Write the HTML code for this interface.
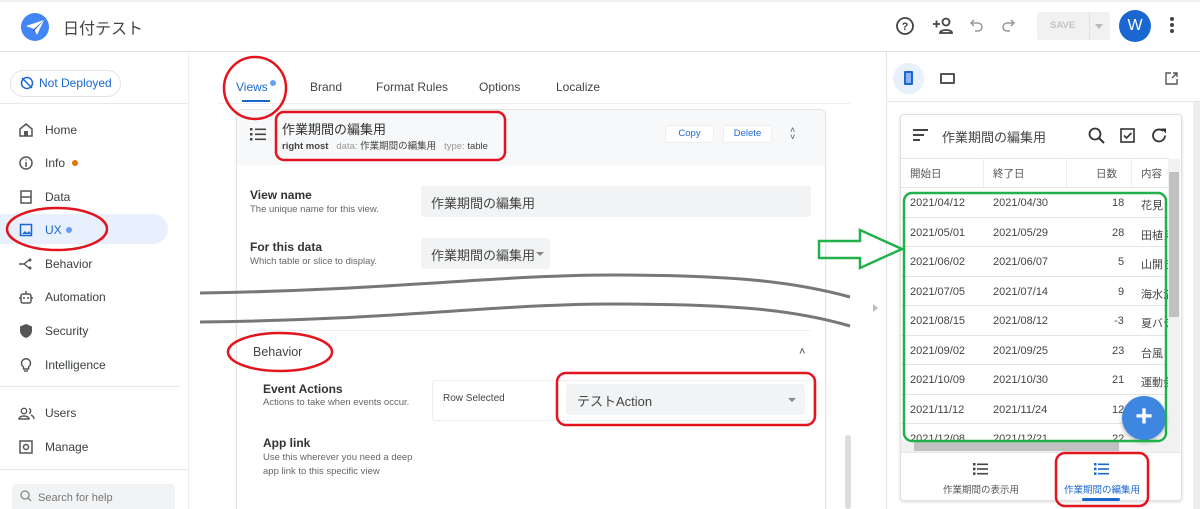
<!DOCTYPE html>
<html><head><meta charset="utf-8"><style>
*{box-sizing:border-box;margin:0;padding:0}
html,body{width:1200px;height:509px;overflow:hidden}
body{background:#fff;font-family:"Liberation Sans","Noto Sans CJK JP",sans-serif;color:#202124;position:relative}
.a{position:absolute;white-space:nowrap}
.nav{font-size:12px;color:#3c4043}
.ic{position:absolute;width:12px;height:12px;border:1.6px solid #555;border-radius:2px}
.lbl{font-size:12px;font-weight:bold;color:#333}
.sub{font-size:9.5px;color:#666}
.row{position:absolute;left:900px;width:268px;height:29.5px;border-bottom:1px solid #e4e4e4;font-size:11px;color:#444;overflow:hidden}
.row span{position:absolute;top:9px;white-space:nowrap}
.tab{font-size:12px;color:#444;top:80px}
</style></head><body>
<!-- top bar -->
<div class="a" style="left:0;top:0;width:1200px;height:2px;background:#eee"></div>
<div class="a" style="left:0;top:51px;width:1200px;height:1px;background:#e0e0e0"></div>
<svg class="a" style="left:20px;top:12px" width="30" height="30" viewBox="0 0 30 30"><circle cx="15" cy="15" r="14" fill="#4285f4"/><path d="M6 14 L24 8 L17 23 L14 17 Z" fill="#fff"/><path d="M14 17 L24 8 L13 20 Z" fill="#1a56b8"/></svg>
<div class="a" style="left:63px;top:15px;font-size:16px;color:#444">日付テスト</div>
<svg class="a" style="left:895px;top:16px" width="20" height="20" viewBox="0 0 20 20"><circle cx="10" cy="10" r="8" fill="none" stroke="#444" stroke-width="1.8"/><text x="10" y="14" font-size="11" text-anchor="middle" fill="#444" font-family="Liberation Sans" font-weight="bold">?</text></svg>
<svg class="a" style="left:932px;top:16px" width="22" height="20" viewBox="0 0 22 20"><path d="M1 8h7M4.5 4.5v7" stroke="#444" stroke-width="1.8"/><circle cx="14" cy="6" r="3.5" fill="none" stroke="#444" stroke-width="1.8"/><path d="M8 17c0-4 12-4 12 0z" fill="none" stroke="#444" stroke-width="1.8"/></svg>
<svg class="a" style="left:970px;top:18px" width="14" height="14" viewBox="0 0 14 14"><path d="M4 2L1 5l3 3M1 5h7a4 4 0 010 8H5" fill="none" stroke="#999" stroke-width="1.5"/></svg>
<svg class="a" style="left:1001px;top:18px" width="14" height="14" viewBox="0 0 14 14"><path d="M10 2l3 3-3 3M13 5H6a4 4 0 000 8h3" fill="none" stroke="#999" stroke-width="1.5"/></svg>
<div class="a" style="left:1037px;top:12px;width:73px;height:28px;background:#f1f1f1;border-radius:3px"></div>
<div class="a" style="left:1089px;top:12px;width:1px;height:28px;background:#e2e2e2"></div>
<div class="a" style="left:1050px;top:20px;font-size:9.5px;color:#c4c4c4;font-weight:bold">SAVE</div>
<div class="a" style="left:1095px;top:24px;border:4px solid transparent;border-top:5px solid #bbb"></div>
<div class="a" style="left:1119px;top:10px;width:32px;height:32px;border-radius:50%;background:#1a67d2;color:#fff;font-size:16px;text-align:center;line-height:32px">W</div>
<div class="a" style="left:1170px;top:17px;width:4px;height:4px;border-radius:50%;background:#444;box-shadow:0 6px 0 #444,0 12px 0 #444"></div>

<!-- sidebar -->
<div class="a" style="left:10px;top:70px;width:111px;height:27px;border:1px solid #e3e3e3;border-radius:14px"></div>
<svg class="a" style="left:20px;top:76px" width="14" height="14" viewBox="0 0 14 14"><circle cx="7" cy="7" r="5.5" fill="none" stroke="#1a67d2" stroke-width="1.5"/><path d="M2 2l10 10" stroke="#1a67d2" stroke-width="1.5"/></svg>
<div class="a" style="left:39px;top:76px;font-size:12px;color:#1a67d2">Not Deployed</div>
<div class="a" style="left:0;top:103px;width:188px;height:1px;background:#e8e8e8"></div>
<div class="a" style="left:0;top:214px;width:168px;height:30px;background:#e8f0fe;border-radius:0 15px 15px 0"></div>
<div class="a nav" style="left:45px;top:123px">Home</div>
<div class="a nav" style="left:45px;top:156px">Info</div><div class="a" style="left:72px;top:160px;width:6px;height:6px;border-radius:50%;background:#e37400"></div>
<div class="a nav" style="left:45px;top:190px">Data</div>
<div class="a nav" style="left:45px;top:223px;color:#1a67d2">UX</div><div class="a" style="left:66px;top:227px;width:6px;height:6px;border-radius:50%;background:#669df6"></div>
<div class="a nav" style="left:45px;top:257px">Behavior</div>
<div class="a nav" style="left:45px;top:290px">Automation</div>
<div class="a nav" style="left:45px;top:324px">Security</div>
<div class="a nav" style="left:45px;top:358px">Intelligence</div>
<div class="a nav" style="left:45px;top:406px">Users</div>
<div class="a nav" style="left:45px;top:440px">Manage</div>
<svg class="a" style="left:18px;top:122px" width="16" height="16"><path d="M2 7l6-5 6 5v7H2z" fill="none" stroke="#555" stroke-width="1.5"/><rect x="6" y="9" width="4" height="5" fill="#555"/></svg>
<svg class="a" style="left:18px;top:155px" width="16" height="16"><circle cx="8" cy="8" r="6" fill="none" stroke="#555" stroke-width="1.5"/><path d="M8 7v5M8 4.5v1" stroke="#555" stroke-width="1.5"/></svg>
<svg class="a" style="left:18px;top:189px" width="16" height="16"><rect x="3" y="2" width="10" height="12" fill="none" stroke="#555" stroke-width="1.5"/><path d="M3 8h10" stroke="#555" stroke-width="1.5"/></svg>
<svg class="a" style="left:18px;top:222px" width="16" height="16"><rect x="2.5" y="2.5" width="11" height="11" fill="none" stroke="#1a67d2" stroke-width="1.5"/><path d="M4 12l3-3 2 2 2-2 2 3z" fill="#1a67d2"/></svg>
<svg class="a" style="left:18px;top:256px" width="16" height="16"><path d="M1 8h5l5-4M6 8l5 4" fill="none" stroke="#555" stroke-width="1.4"/><circle cx="12" cy="4" r="1.5" fill="#555"/><circle cx="12" cy="12" r="1.5" fill="#555"/></svg>
<svg class="a" style="left:18px;top:289px" width="16" height="16"><rect x="3" y="5" width="10" height="9" rx="2" fill="none" stroke="#555" stroke-width="1.5"/><path d="M8 2v3M1 9h2M13 9h2" stroke="#555" stroke-width="1.5"/><circle cx="6" cy="9" r="1" fill="#555"/><circle cx="10" cy="9" r="1" fill="#555"/></svg>
<svg class="a" style="left:18px;top:323px" width="16" height="16"><path d="M8 1l6 2.5v4c0 4-3 6.5-6 7.5-3-1-6-3.5-6-7.5v-4z" fill="#555"/></svg>
<svg class="a" style="left:18px;top:357px" width="16" height="16"><path d="M5.5 10a4.5 4.5 0 115 0v2h-5z" fill="none" stroke="#555" stroke-width="1.4"/><path d="M6 14h4" stroke="#555" stroke-width="1.4"/></svg>
<svg class="a" style="left:18px;top:405px" width="18" height="16"><circle cx="6" cy="6" r="2.7" fill="none" stroke="#555" stroke-width="1.4"/><path d="M1 14c0-4 10-4 10 0z" fill="none" stroke="#555" stroke-width="1.4"/><path d="M11 3.5a2.7 2.7 0 010 5M13 10c2 1 3 2 3 4" fill="none" stroke="#555" stroke-width="1.4"/></svg>
<svg class="a" style="left:18px;top:439px" width="16" height="16"><rect x="2" y="2" width="12" height="12" fill="none" stroke="#555" stroke-width="1.5"/><circle cx="8" cy="8" r="2.5" fill="none" stroke="#555" stroke-width="1.5"/></svg>
<div class="a" style="left:0;top:386px;width:180px;height:1px;background:#e8e8e8"></div>
<div class="a" style="left:0;top:469px;width:188px;height:1px;background:#e8e8e8"></div>
<div class="a" style="left:12px;top:484px;width:163px;height:30px;background:#f1f3f4;border-radius:4px"></div>
<div class="a" style="left:38px;top:492px;font-size:11px;color:#777">Search for help</div>
<svg class="a" style="left:20px;top:490px" width="12" height="12"><circle cx="5" cy="5" r="4" fill="none" stroke="#888" stroke-width="1.3"/><path d="M8 8l3 3" stroke="#888" stroke-width="1.3"/></svg>
<div class="a" style="left:188px;top:52px;width:1px;height:457px;background:#eee"></div>

<!-- tabs -->
<div class="a tab" style="left:236px;color:#1a67d2">Views</div><div class="a" style="left:270px;top:80px;width:6px;height:6px;border-radius:50%;background:#669df6"></div>
<div class="a" style="left:242px;top:100px;width:28px;height:2px;background:#1a67d2"></div>
<div class="a tab" style="left:310px">Brand</div>
<div class="a tab" style="left:376px">Format Rules</div>
<div class="a tab" style="left:479px">Options</div>
<div class="a tab" style="left:556px">Localize</div>
<div class="a" style="left:219px;top:103px;width:631px;height:1px;background:#eee"></div>

<!-- card -->
<div class="a" style="left:236px;top:109px;width:590px;height:410px;border:1px solid #e3e3e3;border-radius:6px;box-shadow:0 1px 2px rgba(0,0,0,.08)"></div>
<div class="a" style="left:237px;top:110px;width:588px;height:55px;background:#f7f8f9;border-radius:6px 6px 0 0"></div>
<svg class="a" style="left:250px;top:127px" width="16" height="14"><g fill="#444"><rect x="0" y="1" width="2.5" height="2.5"/><rect x="0" y="6" width="2.5" height="2.5"/><rect x="0" y="11" width="2.5" height="2.5"/><rect x="5" y="1.5" width="11" height="1.6"/><rect x="5" y="6.5" width="11" height="1.6"/><rect x="5" y="11.5" width="11" height="1.6"/></g></svg>
<div class="a" style="left:282px;top:119px;font-size:13px;color:#333">作業期間の編集用</div>
<div class="a" style="left:282px;top:138px;font-size:9.5px;color:#444"><b>right most</b> &nbsp; <span style="color:#999">data:</span> 作業期間の編集用 &nbsp; <span style="color:#999">type:</span> table</div>
<div class="a" style="left:665px;top:125px;width:49px;height:18px;background:#fff;border:1px solid #eee;border-radius:3px;font-size:9.5px;color:#1a67d2;text-align:center;line-height:16px">Copy</div>
<div class="a" style="left:723px;top:125px;width:49px;height:18px;background:#fff;border:1px solid #eee;border-radius:3px;font-size:9.5px;color:#1a67d2;text-align:center;line-height:16px">Delete</div>
<div class="a" style="left:790px;top:127px;font-size:9px;color:#555;line-height:7px">˄<br>˅</div>
<div class="a lbl" style="left:250px;top:188px">View name</div>
<div class="a sub" style="left:250px;top:204px">The unique name for this view.</div>
<div class="a" style="left:421px;top:186px;width:390px;height:31px;background:#f1f3f4;border-radius:3px"></div>
<div class="a" style="left:431px;top:193px;font-size:13px;color:#444">作業期間の編集用</div>
<div class="a lbl" style="left:250px;top:240px">For this data</div>
<div class="a sub" style="left:250px;top:256px">Which table or slice to display.</div>
<div class="a" style="left:421px;top:238px;width:129px;height:31px;background:#f1f3f4;border-radius:3px"></div>
<div class="a" style="left:431px;top:245px;font-size:13px;color:#444">作業期間の編集用</div>
<div class="a" style="left:536px;top:252px;border:4px solid transparent;border-top:4px solid #888"></div>
<div class="a" style="left:237px;top:292px;width:588px;height:36px;background:#fff"></div>
<div class="a" style="left:250px;top:330px;width:560px;height:1px;background:#eee"></div>
<div class="a" style="left:253px;top:345px;font-size:12.5px;color:#444">Behavior</div>
<div class="a" style="left:799px;top:346px;font-size:11px;color:#444">˄</div>
<div class="a lbl" style="left:263px;top:382px">Event Actions</div>
<div class="a sub" style="left:263px;top:397px">Actions to take when events occur.</div>
<div class="a" style="left:432px;top:380px;width:382px;height:41px;border:1px solid #eee;border-radius:3px"></div>
<div class="a" style="left:443px;top:393px;font-size:10px;color:#444">Row Selected</div>
<div class="a" style="left:566px;top:384px;width:239px;height:31px;background:#f1f3f4;border-radius:3px"></div>
<div class="a" style="left:577px;top:391px;font-size:13px;color:#444">テストAction</div>
<div class="a" style="left:788px;top:398px;border:4px solid transparent;border-top:4px solid #888"></div>
<div class="a lbl" style="left:263px;top:436px">App link</div>
<div class="a sub" style="left:263px;top:451px;line-height:13.5px;white-space:normal;width:165px">Use this wherever you need a deep app link to this specific view</div>
<div class="a" style="left:845px;top:435px;width:6px;height:74px;background:#ddd;border-radius:3px"></div>

<!-- wavy lines -->
<svg class="a" style="left:195px;top:270px" width="660" height="60"><path d="M5 23 C200 20 300 5 420 5 S600 12 655 27" fill="none" stroke="#777" stroke-width="3"/><path d="M5 52 C200 50 300 34 420 34 S600 40 655 56" fill="none" stroke="#777" stroke-width="3"/></svg>

<!-- red circles -->
<svg class="a" style="left:0;top:0" width="880" height="509">
<g fill="none" stroke="#e3141e" stroke-width="2.5">
<ellipse cx="255" cy="88" rx="31" ry="31"/>
<rect x="276" y="112" width="229" height="48" rx="8"/>
<ellipse cx="57" cy="229" rx="50" ry="21"/>
<ellipse cx="280" cy="352" rx="52" ry="19"/>
<rect x="557" y="373" width="258" height="52" rx="9"/>
</g></svg>

<!-- preview panel -->
<div class="a" style="left:886px;top:52px;width:1px;height:457px;background:#e3e3e3"></div>
<div class="a" style="left:887px;top:101px;width:313px;height:1px;background:#e6e6e6"></div>
<div class="a" style="left:893px;top:63px;width:31px;height:31px;border-radius:50%;background:#e8f0fe"></div>
<div class="a" style="left:904px;top:71px;width:9px;height:14px;border:2px solid #1a67d2;border-radius:1px;background:#8ab4f8"></div>
<div class="a" style="left:940px;top:73px;width:15px;height:11px;border:2px solid #555;border-radius:1px"></div>
<svg class="a" style="left:1165px;top:72px" width="13" height="13"><path d="M6 1H1v11h11V7M7 6l5-5M8 1h4v4" fill="none" stroke="#555" stroke-width="1.4"/></svg>
<div class="a" style="left:1193px;top:102px;width:7px;height:407px;background:#eee"></div>

<div class="a" style="left:900px;top:114px;width:282px;height:387px;border:1px solid #e0e0e0;border-radius:4px;box-shadow:0 1px 3px rgba(0,0,0,.15)"></div>
<svg class="a" style="left:913px;top:129px" width="16" height="12"><g fill="#444"><rect x="0" y="0" width="15" height="2"/><rect x="0" y="5" width="11" height="2"/><rect x="0" y="10" width="7" height="2"/></g></svg>
<div class="a" style="left:942px;top:127px;font-size:13px;color:#444">作業期間の編集用</div>
<svg class="a" style="left:1088px;top:127px" width="18" height="18"><circle cx="7" cy="7" r="5.5" fill="none" stroke="#333" stroke-width="1.8"/><path d="M11 11l5 5" stroke="#333" stroke-width="2"/></svg>
<svg class="a" style="left:1120px;top:128px" width="15" height="15"><rect x="1" y="1" width="13" height="13" fill="none" stroke="#333" stroke-width="1.6"/><path d="M4 7.5l2.5 2.5 5-5" fill="none" stroke="#333" stroke-width="1.6"/></svg>
<svg class="a" style="left:1151px;top:127px" width="17" height="17"><path d="M14 8.5a6 6 0 11-2-4.5" fill="none" stroke="#333" stroke-width="1.8"/><path d="M10 1.5h5v5z" fill="#333"/></svg>
<div class="a" style="left:901px;top:158px;width:268px;height:1px;background:#e6e6e6"></div>
<div class="a" style="left:901px;top:187px;width:268px;height:1px;background:#e6e6e6"></div>
<div class="a" style="left:983px;top:159px;width:1px;height:28px;background:#eee"></div>
<div class="a" style="left:1066px;top:159px;width:1px;height:28px;background:#eee"></div>
<div class="a" style="left:1131px;top:159px;width:1px;height:28px;background:#eee"></div>
<div class="a" style="left:910px;top:166px;font-size:10.5px;color:#555">開始日</div>
<div class="a" style="left:993px;top:166px;font-size:10.5px;color:#555">終了日</div>
<div class="a" style="left:1096px;top:166px;font-size:10.5px;color:#555">日数</div>
<div class="a" style="left:1141px;top:166px;font-size:10.5px;color:#555">内容</div>
<div style="position:absolute;left:0;top:0;width:1168px;height:440px;overflow:hidden">
<div class="row" style="top:188px"><span style="left:10px">2021/04/12</span><span style="left:93px">2021/04/30</span><span style="left:212px">18</span><span style="left:241px">花見</span></div>
<div class="row" style="top:217.5px"><span style="left:10px">2021/05/01</span><span style="left:93px">2021/05/29</span><span style="left:212px">28</span><span style="left:241px">田植え</span></div>
<div class="row" style="top:247px"><span style="left:10px">2021/06/02</span><span style="left:93px">2021/06/07</span><span style="left:218px">5</span><span style="left:241px">山開き</span></div>
<div class="row" style="top:276.5px"><span style="left:10px">2021/07/05</span><span style="left:93px">2021/07/14</span><span style="left:218px">9</span><span style="left:241px">海水浴</span></div>
<div class="row" style="top:306px"><span style="left:10px">2021/08/15</span><span style="left:93px">2021/08/12</span><span style="left:214px">-3</span><span style="left:241px">夏バテ</span></div>
<div class="row" style="top:335.5px"><span style="left:10px">2021/09/02</span><span style="left:93px">2021/09/25</span><span style="left:212px">23</span><span style="left:241px">台風</span></div>
<div class="row" style="top:365px"><span style="left:10px">2021/10/09</span><span style="left:93px">2021/10/30</span><span style="left:212px">21</span><span style="left:241px">運動会</span></div>
<div class="row" style="top:394.5px"><span style="left:10px">2021/11/12</span><span style="left:93px">2021/11/24</span><span style="left:212px">12</span><span style="left:241px">紅葉</span></div>
<div class="row" style="top:424px"><span style="left:10px">2021/12/08</span><span style="left:93px">2021/12/21</span><span style="left:212px">22</span><span style="left:241px">冬</span></div>
</div>
<div class="a" style="left:1168px;top:159px;width:12px;height:281px;background:#f1f1f1"></div>
<div class="a" style="left:1169px;top:172px;width:10px;height:145px;background:#c1c1c1"></div>
<div class="a" style="left:901px;top:440px;width:279px;height:12px;background:#f1f1f1"></div>
<div class="a" style="left:914px;top:441px;width:205px;height:10px;background:#c1c1c1"></div>
<div class="a" style="left:1122px;top:396px;width:44px;height:44px;border-radius:50%;background:#3f86e0;box-shadow:0 2px 4px rgba(0,0,0,.3);color:#fff;font-size:30px;text-align:center;line-height:42px;font-weight:bold">+</div>
<div class="a" style="left:901px;top:452px;width:280px;height:1px;background:#e6e6e6"></div>
<svg class="a" style="left:973px;top:463px" width="15" height="12"><g fill="#444"><rect x="0" y="0" width="2.5" height="2.5"/><rect x="0" y="4.7" width="2.5" height="2.5"/><rect x="0" y="9.4" width="2.5" height="2.5"/><rect x="4" y="0.5" width="11" height="1.6"/><rect x="4" y="5.2" width="11" height="1.6"/><rect x="4" y="9.9" width="11" height="1.6"/></g></svg>
<div class="a" style="left:943px;top:482px;font-size:9.5px;color:#555">作業期間の表示用</div>
<svg class="a" style="left:1094px;top:463px" width="15" height="12"><g fill="#1a67d2"><rect x="0" y="0" width="2.5" height="2.5"/><rect x="0" y="4.7" width="2.5" height="2.5"/><rect x="0" y="9.4" width="2.5" height="2.5"/><rect x="4" y="0.5" width="11" height="1.6"/><rect x="4" y="5.2" width="11" height="1.6"/><rect x="4" y="9.9" width="11" height="1.6"/></g></svg>
<div class="a" style="left:1064px;top:482px;font-size:9.5px;color:#1a67d2">作業期間の編集用</div>
<div class="a" style="left:1082px;top:498px;width:38px;height:3px;background:#1a67d2;border-radius:2px"></div>

<!-- annotations right -->
<svg class="a" style="left:0;top:0" width="1200" height="509">
<rect x="904" y="193" width="262" height="248" rx="8" fill="none" stroke="#22b04a" stroke-width="2.5"/>
<path d="M819 241 H860 V230 L902 249 L860 268 V258 H819 Z" fill="none" stroke="#22b04a" stroke-width="2.5"/>
<rect x="1056" y="453" width="92" height="53" rx="9" fill="none" stroke="#e3141e" stroke-width="2.5"/>
<path d="M873 304 l5 4 -5 4z" fill="#bbb"/>
</svg>
</body></html>
